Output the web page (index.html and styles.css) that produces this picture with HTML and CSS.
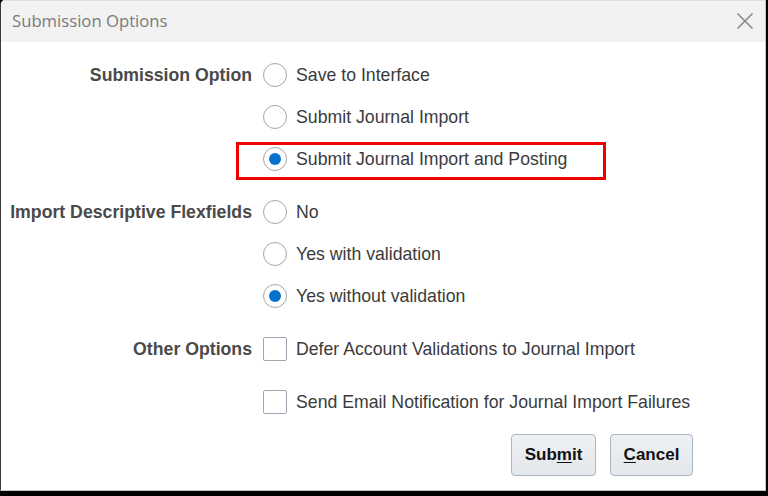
FILE: index.html
```html
<!DOCTYPE html>
<html>
<head>
<meta charset="utf-8">
<link rel="stylesheet" href="styles.css">
</head>
<body>
<div class="frame">
  <div class="dialog">
    <div class="header">
      <span class="title">Submission Options</span>
      <svg class="close" width="18" height="18" viewBox="0 0 18 18"><path d="M1.5 1.5 L16.5 16.5 M16.5 1.5 L1.5 16.5" stroke="#8a8a8a" stroke-width="1.6" fill="none"/></svg>
    </div>
    <div class="form">
      <div class="group">
        <div class="label">Submission Option</div>
        <div class="options">
          <div class="opt"><span class="radio"></span><span class="text">Save to Interface</span></div>
          <div class="opt"><span class="radio"></span><span class="text">Submit Journal Import</span></div>
          <div class="opt highlight"><span class="radio checked"></span><span class="text">Submit Journal Import and Posting</span></div>
        </div>
      </div>
      <div class="group">
        <div class="label">Import Descriptive Flexfields</div>
        <div class="options">
          <div class="opt"><span class="radio"></span><span class="text">No</span></div>
          <div class="opt"><span class="radio"></span><span class="text">Yes with validation</span></div>
          <div class="opt"><span class="radio checked"></span><span class="text">Yes without validation</span></div>
        </div>
      </div>
      <div class="group">
        <div class="label">Other Options</div>
        <div class="options checks">
          <div class="opt"><span class="check"></span><span class="text">Defer Account Validations to Journal Import</span></div>
          <div class="opt"><span class="check"></span><span class="text">Send Email Notification for Journal Import Failures</span></div>
        </div>
      </div>
      <div class="buttons">
        <button class="btn submit">Sub<u>m</u>it</button>
        <button class="btn cancel"><u>C</u>ancel</button>
      </div>
    </div>
  </div>
</div>
</body>
</html>
```

FILE: styles.css
```css
html, body {
  margin: 0;
  padding: 0;
  background: #000;
  width: 768px;
  height: 496px;
  overflow: hidden;
  font-family: "Liberation Sans", Arial, sans-serif;
}
.frame {
  width: 768px;
  height: 496px;
  padding: 0 2px 5px 0;
  box-sizing: border-box;
}
.dialog {
  width: 766px;
  height: 491px;
  box-sizing: border-box;
  background: #fff;
  border-left: 1px solid #3a3a3a;
  border-right: 1px solid #c8c8c8;
  border-bottom: 1px solid #c8c8c8;
  border-top-left-radius: 5px;
  overflow: hidden;
  display: flex;
  flex-direction: column;
}
.header {
  height: 42px;
  flex: none;
  background: #f2f2f2;
  border-top: 1px solid #e0e0e0;
  box-sizing: border-box;
  display: flex;
  align-items: center;
  justify-content: space-between;
  padding: 0 11px 0 11px;
}
.title {
  font-family: "Open Sans", "Liberation Sans", sans-serif;
  font-size: 16.7px;
  color: #7a7a7a;
  margin-top: -2px;
}
.close {
  margin-top: -2px;
}
.form {
  padding-top: 12px;
  display: flex;
  flex-direction: column;
  gap: 11px;
}
.group {
  display: grid;
  grid-template-columns: 251px 1fr;
  column-gap: 11px;
}
.label {
  height: 42px;
  line-height: 42px;
  text-align: right;
  font-weight: bold;
  font-size: 17.7px;
  color: #4a4a4a;
  white-space: nowrap;
}
.options {
  display: flex;
  flex-direction: column;
}
.options.checks {
  gap: 11px;
}
.opt {
  position: relative;
  height: 42px;
  display: flex;
  align-items: center;
  gap: 9px;
}
.text {
  font-size: 17.7px;
  color: #3b3b3b;
  white-space: nowrap;
}
.radio {
  width: 24px;
  height: 24px;
  box-sizing: border-box;
  border: 1.5px solid #9ea7b1;
  border-radius: 50%;
  background: #fff;
  display: flex;
  align-items: center;
  justify-content: center;
  flex: none;
}
.radio.checked::after {
  content: "";
  width: 12px;
  height: 12px;
  border-radius: 50%;
  background: #0572ce;
}
.check {
  width: 24px;
  height: 24px;
  box-sizing: border-box;
  border: 1.5px solid #9ea7b1;
  border-radius: 2px;
  background: #fff;
  flex: none;
}
.highlight::before {
  content: "";
  position: absolute;
  left: -27px;
  top: 4px;
  width: 370px;
  height: 38px;
  box-sizing: border-box;
  border: 3px solid #ee0000;
}
.buttons {
  display: flex;
  justify-content: flex-end;
  gap: 14px;
  padding-right: 72px;
}
.btn {
  height: 42px;
  box-sizing: border-box;
  border: 1px solid #a9b6c4;
  border-radius: 4px;
  background: linear-gradient(#eef0f3, #e4e7eb);
  font-family: "Liberation Sans", Arial, sans-serif;
  font-weight: bold;
  font-size: 17px;
  color: #111;
  padding: 0;
}
.btn u {
  text-underline-offset: 2px;
}
.submit {
  width: 85px;
}
.cancel {
  width: 83px;
}
```
